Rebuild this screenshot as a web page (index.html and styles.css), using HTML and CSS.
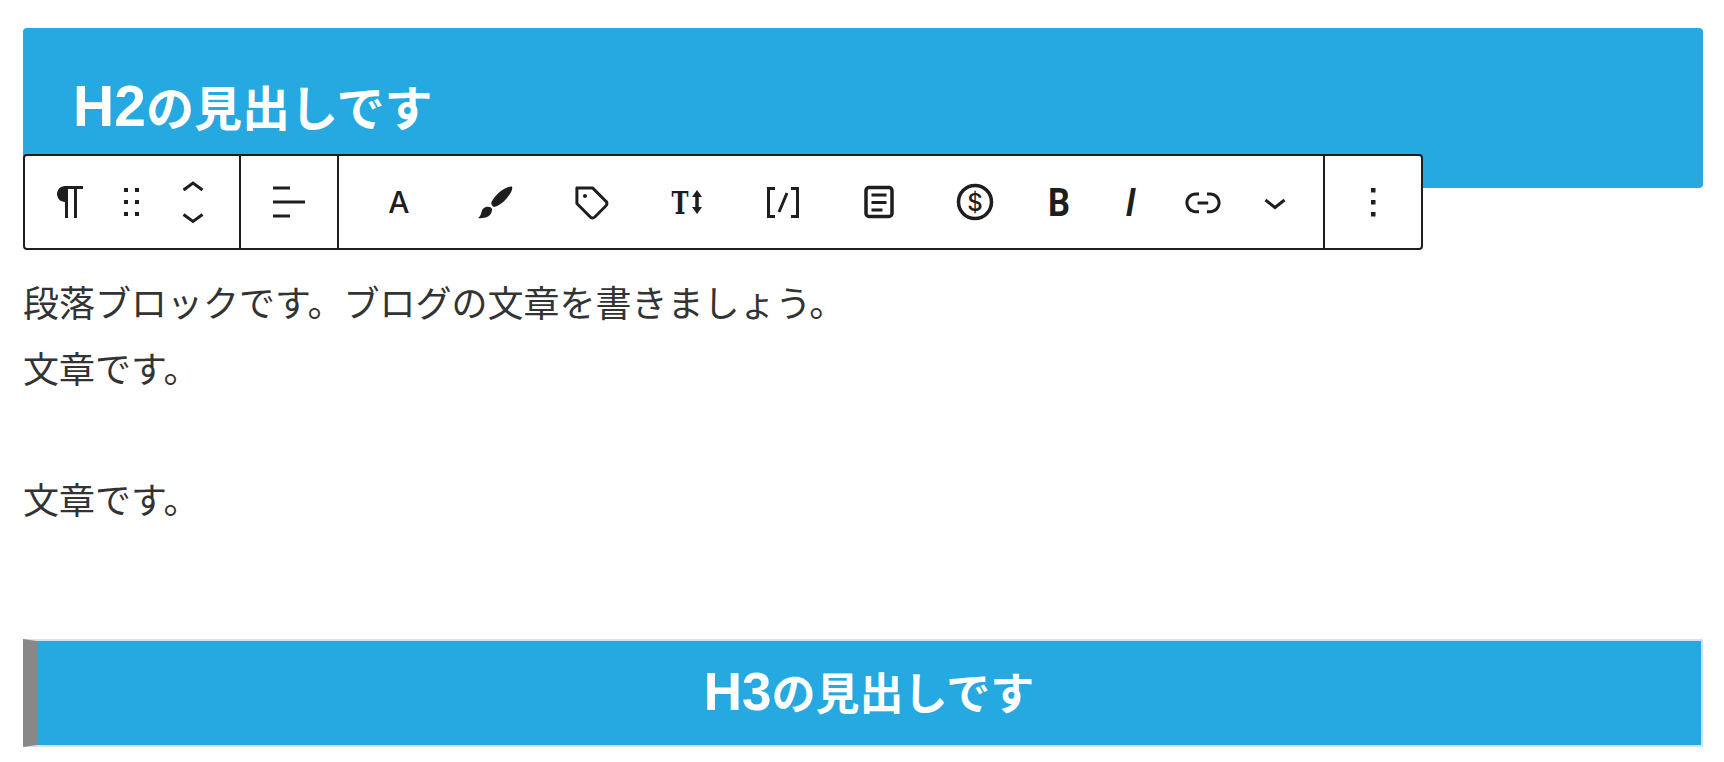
FILE: index.html
```html
<!DOCTYPE html>
<html lang="ja">
<head>
  <meta charset="UTF-8">
  <meta name="viewport" content="width=device-width, initial-scale=1.0">
  <title>ブロックエディタ</title>
  <link rel="stylesheet" href="styles.css">
</head>
<body>
  <div class="editor">
    <h2 class="heading-two"><span class="latin">H2</span>の見出しです</h2>

    <div class="toolbar">
      <div class="tool-group group-block">
        <span class="tool tool-wide">
          <svg viewBox="0 0 24 24"><path d="M18 4H9c-2.200 0-4 1.800-4 4s1.800 4 4 4v8h1.500V5.500h3V20H15V5.500h3V4z"/></svg>
        </span>
        <span class="tool tool-wide">
          <svg viewBox="0 0 48 48"><path d="M16 10h4v4h-4zM27 10h4v4h-4zM16 22h4v4h-4zM27 22h4v4h-4zM16 34h4v4h-4zM27 34h4v4h-4z"/></svg>
        </span>
        <span class="tool tool-wide">
          <svg viewBox="0 0 48 48"><path class="line thin" d="M14.500 12l9.500-7 9.500 7M14.500 36.500l9.500 7 9.500-7"/></svg>
        </span>
      </div>

      <div class="tool-group group-align">
        <span class="tool">
          <svg viewBox="0 0 48 48"><path d="M8 8.500h17v3H8zM8 22.500h32v3H8zM8 36.500h17v3H8z"/></svg>
        </span>
      </div>

      <div class="tool-group group-format">
        <span class="tool tool-wide-96"><svg viewBox="0 0 48 48"><text class="glyph glyph-a" x="24" y="35" text-anchor="middle">A</text></svg></span>
        <span class="tool tool-wide-96">
          <svg viewBox="0 0 48 48"><path d="M41 8.500C42 11 40 15 36 20 32 25 27 28 23 29 21 28 20 26.500 20.500 24 23 19 28 14 33 11 36 9.500 39 8 41 8.500zM15 29c3-.5 5.500.5 6 2 .3 3-1.500 6-4 7.500C14.500 40 10 40.500 7 40c2-1 3-3.500 3.500-6 .5-2.500 2-4.500 4.500-5z"/></svg>
        </span>
        <span class="tool tool-wide-96">
          <svg viewBox="0 0 24 24"><path d="M20.100 11.200l-6.700-6.700c-.1-.1-.3-.2-.5-.2H5c-.4-.1-.8.3-.8.7v7.800c0 .2.1.4.2.5l6.700 6.700c.2.2.5.4.7.5s.6.2.9.2c.3 0 .6-.1.9-.2.3-.1.5-.3.8-.5l5.600-5.600c.4-.4.7-1 .7-1.600.1-.6-.2-1.200-.6-1.700zM19 13.400L13.400 19c-.1.1-.2.1-.3.2-.2.1-.4.1-.6 0-.1 0-.2-.1-.3-.2l-6.500-6.500V5.800h6.800l6.500 6.500c.2.2.2.4.2.6 0 .1 0 .3-.2.5zM9 8c-.6 0-1 .4-1 1s.4 1 1 1 1-.4 1-1-.4-1-1-1z"/></svg>
        </span>
        <span class="tool tool-wide-96">
          <svg viewBox="0 0 48 48"><text class="glyph glyph-t" x="8.500" y="35.500" textLength="17" lengthAdjust="spacingAndGlyphs">T</text><path class="line" d="M34 17v14"/><path d="M29 19l5-7 5 7zM29 29l5 7 5-7z"/></svg>
        </span>
        <span class="tool tool-wide-96">
          <svg viewBox="0 0 48 48"><path class="line thin" d="M16 10.500H9.500v28H16M32 10.500h6.500v28H32M28 15l-8 19"/></svg>
        </span>
        <span class="tool tool-wide-96">
          <svg viewBox="0 0 48 48"><rect class="line" x="11" y="9.500" width="26" height="29" rx="3"/><path d="M16.500 15.500h15v3h-15zM16.500 23h15v3h-15zM16.500 30.500h11v3h-11z"/></svg>
        </span>
        <span class="tool tool-wide-96">
          <svg viewBox="0 0 48 48"><circle class="line" cx="24" cy="24" r="16.500"/><text class="glyph glyph-dollar" x="24" y="32.500" text-anchor="middle">$</text></svg>
        </span>
        <span class="tool"><svg viewBox="0 0 48 48"><text class="glyph glyph-b" x="13" y="38" textLength="22" lengthAdjust="spacingAndGlyphs">B</text></svg></span>
        <span class="tool"><svg viewBox="0 0 48 48"><text class="glyph glyph-i" x="23.500" y="38" text-anchor="middle">I</text></svg></span>
        <span class="tool">
          <svg viewBox="0 0 24 24"><path d="M15.600 7.200H14v1.500h1.600c2 0 3.700 1.700 3.700 3.700s-1.700 3.700-3.700 3.700H14v1.500h1.600c2.800 0 5.200-2.300 5.200-5.200 0-2.900-2.300-5.200-5.200-5.200zM4.700 12.400c0-2 1.700-3.700 3.700-3.700H10V7.200H8.400c-2.900 0-5.200 2.300-5.200 5.200 0 2.900 2.300 5.200 5.200 5.200H10v-1.500H8.400c-2 0-3.700-1.700-3.700-3.700zm4.600.9h5.300v-1.500H9.300v1.500z"/></svg>
        </span>
        <span class="tool">
          <svg viewBox="0 0 48 48"><path class="line thin" d="M14.500 22l9.500 7.500 9.500-7.500"/></svg>
        </span>
      </div>

      <div class="tool-group group-more">
        <span class="tool">
          <svg viewBox="0 0 48 48"><path d="M22 10h4.500v4.500H22zM22 22h4.500v4.500H22zM22 34h4.500v4.500H22z"/></svg>
        </span>
      </div>
    </div>

    <div class="content">
      <p>段落ブロックです。ブログの文章を書きましょう。</p>
      <p>文章です。</p>
      <p class="spaced">文章です。</p>
    </div>

    <h3 class="heading-three"><span class="latin">H3</span>の見出しです</h3>
  </div>
</body>
</html>
```

FILE: styles.css
```css
* {
  box-sizing: border-box;
}
body {
  margin: 0;
  background-color: #fff;
  color: #333;
  font-family: "Liberation Sans", "Noto Sans CJK JP", sans-serif;
}
.editor {
  position: relative;
  padding: 28px 21px 0 23px;
}
.heading-two {
  margin: 0;
  height: 160px;
  padding: 44px 0 0 50px;
  background-color: #26a8e0;
  border-radius: 4px;
  color: #fff;
  font-size: 48px;
  line-height: 68px;
  font-weight: bold;
}
.heading-two .latin {
  font-size: 57px;
}
.toolbar {
  position: absolute;
  top: 154px;
  left: 23px;
  display: flex;
  width: 1400px;
  height: 96px;
  background-color: #fff;
  border: 2px solid #1e1e1e;
  border-radius: 4px;
}
.tool-group {
  display: flex;
  align-items: center;
  border-right: 2px solid #1e1e1e;
}
.tool-group:last-child {
  border-right: 0;
}
.group-block {
  width: 216px;
  padding-left: 15px;
}
.group-align {
  width: 98px;
  justify-content: center;
}
.group-format {
  width: 986px;
  padding-left: 12px;
}
.group-more {
  flex: 1;
  justify-content: center;
}
.tool {
  display: flex;
  align-items: center;
  justify-content: center;
  flex: none;
  width: 72px;
}
.tool-wide {
  width: 61px;
}
.tool-wide-96 {
  width: 96px;
}
.tool svg {
  display: block;
  width: 48px;
  height: 48px;
  fill: #1e1e1e;
  overflow: visible;
}
.tool .line {
  fill: none;
  stroke: #1e1e1e;
  stroke-width: 3.5;
}
.tool .thin {
  stroke-width: 3;
}
.glyph-a {
  font-family: Inter, sans-serif;
  font-size: 30px;
  font-weight: 500;
}
.glyph-t {
  font-family: "DejaVu Serif", serif;
  font-size: 32px;
  font-weight: bold;
}
.glyph-dollar {
  font-family: Inter, sans-serif;
  font-size: 24px;
  font-weight: 500;
}
.glyph-b {
  font-family: Roboto, sans-serif;
  font-size: 39px;
  font-weight: bold;
}
.glyph-i {
  font-family: Roboto, sans-serif;
  font-size: 39px;
  font-weight: 500;
  font-style: italic;
}
.content {
  padding-top: 84px;
  font-size: 36px;
  line-height: 66px;
}
.content p {
  margin: 0;
}
.content .spaced {
  margin-top: 65px;
}
.heading-three {
  margin: 104px 0 0;
  height: 108px;
  border: 2px solid #d3e3ef;
  border-left: 14px solid #888;
  background-color: #26a8e0;
  color: #fff;
  font-size: 44px;
  line-height: 102px;
  font-weight: bold;
  text-align: center;
}
.heading-three .latin {
  font-size: 53px;
}
```
